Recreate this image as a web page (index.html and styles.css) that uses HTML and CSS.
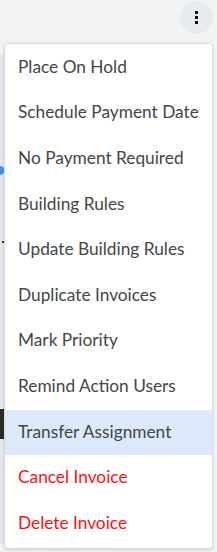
FILE: index.html
```html
<!DOCTYPE html>
<html lang="en">
<head>
  <meta charset="UTF-8">
  <meta name="viewport" content="width=device-width, initial-scale=1.0">
  <title>Invoice actions</title>
  <link rel="stylesheet" href="styles.css">
</head>
<body>
  <div class="page">
    <div class="side-strip"></div>
    <div class="side-dot"></div>
    <div class="side-tick"></div>
    <div class="side-bar"></div>

    <div class="topbar">
      <button class="kebab" aria-label="More actions">
        <span></span><span></span><span></span>
      </button>
    </div>

    <ul class="menu">
      <li>Place On Hold</li>
      <li>Schedule Payment Date</li>
      <li>No Payment Required</li>
      <li>Building Rules</li>
      <li>Update Building Rules</li>
      <li>Duplicate Invoices</li>
      <li>Mark Priority</li>
      <li>Remind Action Users</li>
      <li class="active">Transfer Assignment</li>
      <li class="danger">Cancel Invoice</li>
      <li class="danger">Delete Invoice</li>
    </ul>
  </div>
</body>
</html>
```

FILE: styles.css
```css
/* Global */
body {
  margin: 0;
  padding: 0;
  background-color: #f3f3f3;
  font-family: Lato, "Open Sans", sans-serif;
}

.page {
  position: relative;
  width: 217px;
  height: 552px;
  overflow: hidden;
}

/* bits of the page behind the menu */
.side-strip {
  position: absolute;
  left: 0;
  top: 54px;
  width: 6px;
  height: 490px;
  background-color: #e4e9ef;
}

.side-dot {
  position: absolute;
  left: 0;
  top: 166px;
  width: 4px;
  height: 9px;
  border-radius: 0 4px 4px 0;
  background-color: #4a90e2;
}

.side-tick {
  position: absolute;
  left: 2px;
  top: 241px;
  width: 2px;
  height: 2px;
  background-color: #333;
}

.side-bar {
  position: absolute;
  left: 0;
  top: 409px;
  width: 6px;
  height: 30px;
  background-color: #2b2b2b;
}

/* Top bar */
.topbar {
  display: flex;
  justify-content: flex-end;
  padding: 1px 4px 0 0;
}

.kebab {
  width: 33px;
  height: 33px;
  margin: 0;
  border: none;
  border-radius: 50%;
  background-color: #e6ebf0;
  display: flex;
  flex-direction: column;
  align-items: center;
  justify-content: center;
  gap: 2.5px;
  padding: 0;
  cursor: pointer;
}

.kebab span {
  width: 3px;
  height: 2.5px;
  background-color: #111;
}

/* Menu */
.menu {
  position: absolute;
  top: 43px;
  left: 4px;
  width: 209px;
  margin: 0;
  padding: 1px 0;
  list-style: none;
  background-color: #fff;
  border: 1px solid #dcdcdc;
  border-radius: 4px;
  box-sizing: border-box;
  box-shadow: 0 1px 3px rgba(0, 0, 0, 0.15);
  overflow: hidden;
}

.menu li {
  height: 45.6px;
  box-sizing: border-box;
  display: flex;
  align-items: center;
  padding: 0 0 3px 13px;
  font-size: 17.3px;
  color: #454545;
  white-space: nowrap;
  cursor: pointer;
}

.menu li.active {
  background-color: #dce9fb;
}

.menu li.danger {
  color: #ff0f0f;
}
```
